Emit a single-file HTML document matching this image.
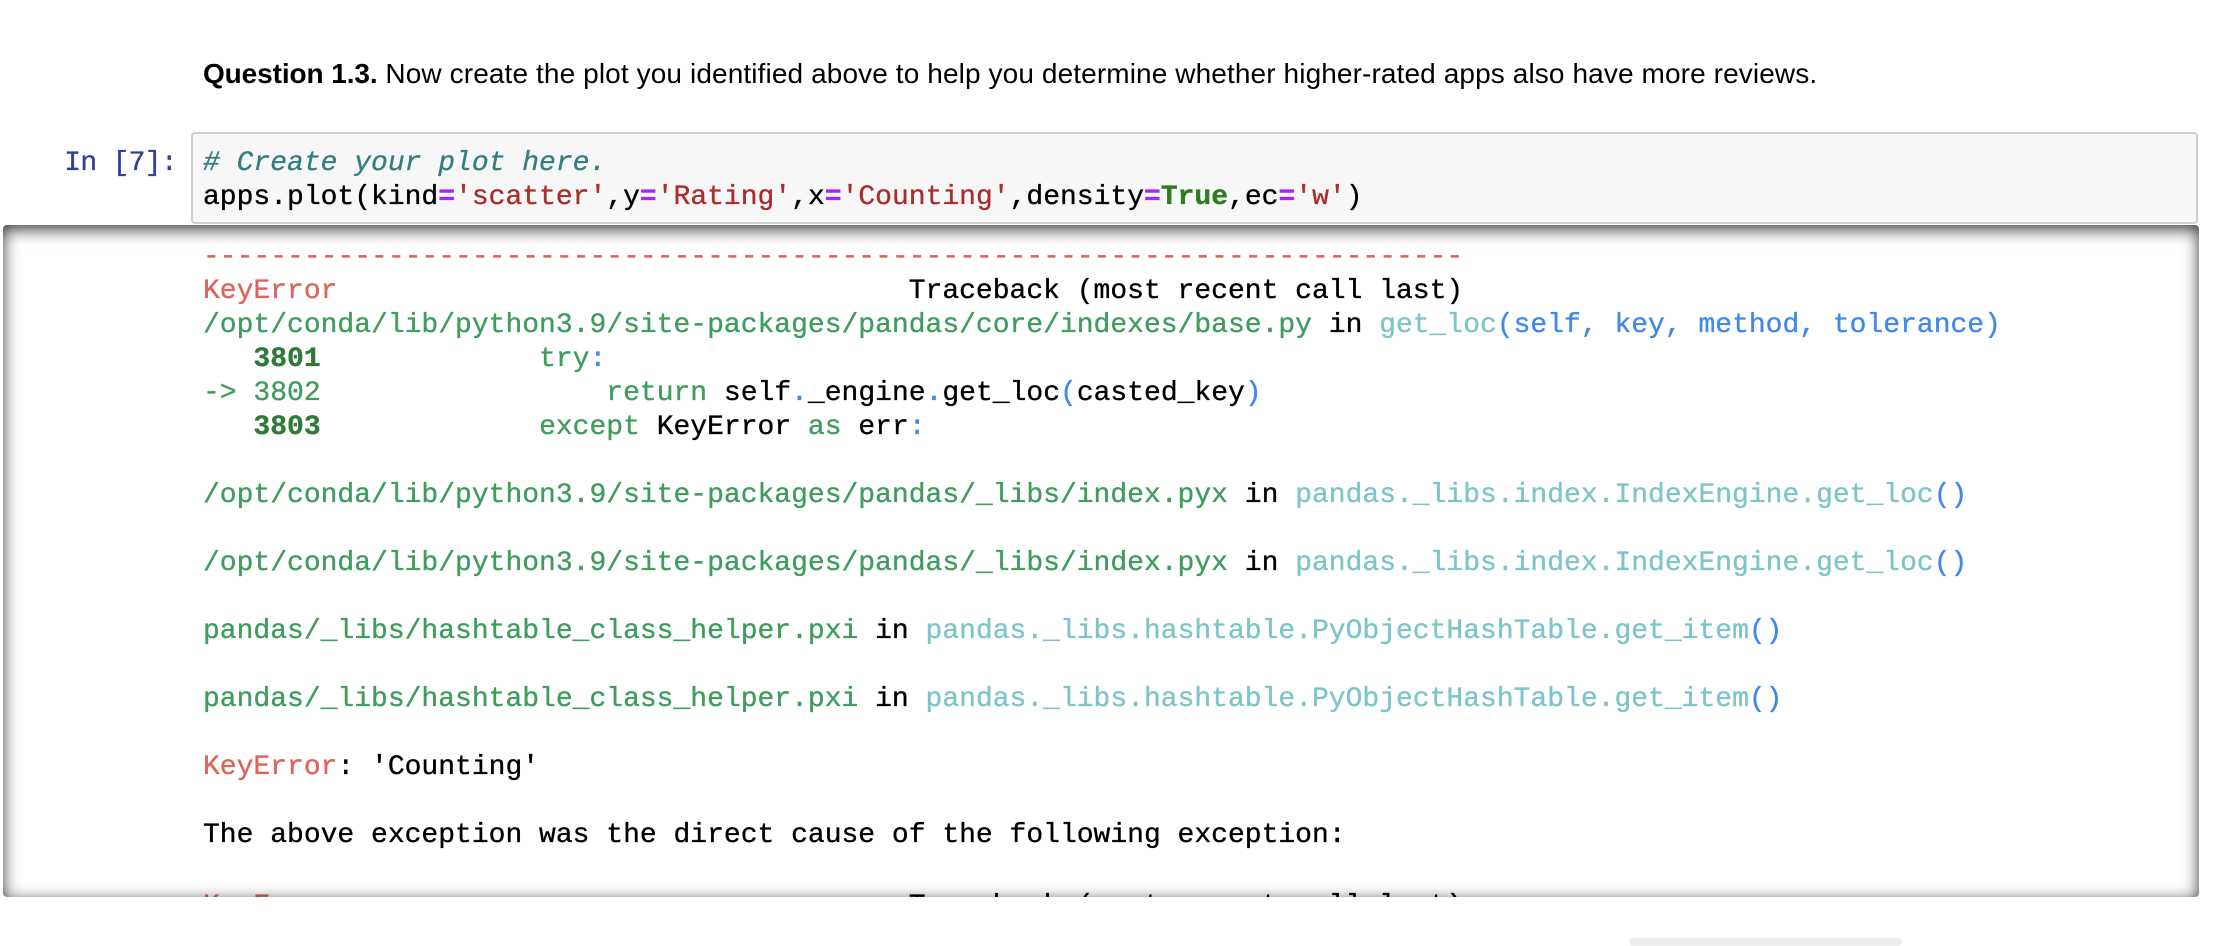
<!DOCTYPE html>
<html>
<head>
<meta charset="utf-8">
<style>
html,body{margin:0;padding:0;background:#fff;width:2216px;height:942px;overflow:hidden}
.q{position:absolute;left:203px;top:57px;font:28px/34px "Liberation Sans",sans-serif;color:#000;white-space:pre;letter-spacing:.11px}
.q b{font-weight:700;letter-spacing:-.1px}
.prompt{position:absolute;left:0;width:177px;top:147px;text-align:right;font:28px/34px "Liberation Mono",monospace;color:#303f9f;letter-spacing:-.7px;-webkit-text-stroke:.3px #303f9f}
.input{position:absolute;left:191px;top:132px;width:2003px;height:88px;background:#f7f7f7;border:2px solid #cfcfcf;border-radius:4px}
pre{margin:0;font:28px/34px "Liberation Mono",monospace;color:#000;-webkit-text-stroke:.35px;filter:blur(.3px)}
.code{position:absolute;left:203px;top:147px}
.output{position:absolute;left:3px;top:225px;width:2196px;height:672px;overflow:hidden;border-radius:4px;background:#fff}
.output pre{position:absolute;left:200px;top:16px}
.last{position:relative;top:3px}
.shadow{position:absolute;left:3px;top:225px;width:2196px;height:672px;border-radius:4px;box-shadow:inset 0 4px 16px rgba(0,0,0,.8);pointer-events:none}
.foot{position:absolute;left:1629px;top:938px;width:273px;height:8px;background:#eee;border-radius:4px}
i{font-style:italic;color:#337f7f}
.o{color:#a2f;font-weight:700}
.s{color:#ab2d2a}
.k{color:#2f7d1f;font-weight:700}
.r{color:#de6459}
.g{color:#3f9d5c}
.G{color:#2f7a36;font-weight:700}
.c{color:#7cc5c8}
.b{color:#4088f0}
</style>
</head>
<body>
<div class="q"><b>Question 1.3.</b> Now create the plot you identified above to help you determine whether higher-rated apps also have more reviews.</div>
<div class="prompt">In [7]:</div>
<div class="input"></div>
<pre class="code"><i># Create your plot here.</i>
apps.plot(kind<span class="o">=</span><span class="s">'scatter'</span>,y<span class="o">=</span><span class="s">'Rating'</span>,x<span class="o">=</span><span class="s">'Counting'</span>,density<span class="o">=</span><span class="k">True</span>,ec<span class="o">=</span><span class="s">'w'</span>)</pre>
<div class="output"><pre><span class="r">---------------------------------------------------------------------------</span>
<span class="r">KeyError</span>                                  Traceback (most recent call last)
<span class="g">/opt/conda/lib/python3.9/site-packages/pandas/core/indexes/base.py</span> in <span class="c">get_loc</span><span class="b">(self, key, method, tolerance)</span>
<span class="G">   3801</span>             <span class="g">try</span><span class="b">:</span>
<span class="g">-&gt; 3802</span>                 <span class="g">return</span> self<span class="b">.</span>_engine<span class="b">.</span>get_loc<span class="b">(</span>casted_key<span class="b">)</span>
<span class="G">   3803</span>             <span class="g">except</span> KeyError <span class="g">as</span> err<span class="b">:</span>

<span class="g">/opt/conda/lib/python3.9/site-packages/pandas/_libs/index.pyx</span> in <span class="c">pandas._libs.index.IndexEngine.get_loc</span><span class="b">()</span>

<span class="g">/opt/conda/lib/python3.9/site-packages/pandas/_libs/index.pyx</span> in <span class="c">pandas._libs.index.IndexEngine.get_loc</span><span class="b">()</span>

<span class="g">pandas/_libs/hashtable_class_helper.pxi</span> in <span class="c">pandas._libs.hashtable.PyObjectHashTable.get_item</span><span class="b">()</span>

<span class="g">pandas/_libs/hashtable_class_helper.pxi</span> in <span class="c">pandas._libs.hashtable.PyObjectHashTable.get_item</span><span class="b">()</span>

<span class="r">KeyError</span>: 'Counting'

The above exception was the direct cause of the following exception:

<span class="last"><span class="r">KeyError</span>                                  Traceback (most recent call last)</span></pre></div>
<div class="shadow"></div>
<div class="foot"></div>
</body>
</html>
